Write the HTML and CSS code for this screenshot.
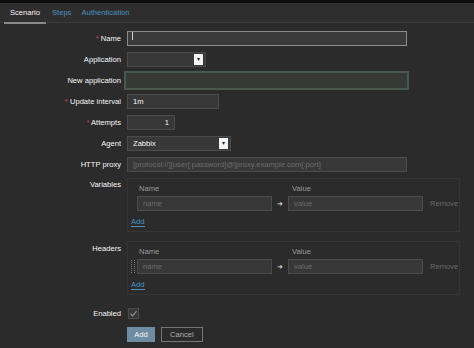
FILE: index.html
```
<html>
	<head>
		<title>Web scenario</title>
		<meta charset="utf-8" />
		<link rel="stylesheet" href="styles.css">
	</head>
	<body>
		<div class="topbar"></div>
		<div class="tabs">
			<span class="tab active">Scenario</span>
			<span class="tab">Steps</span>
			<span class="tab">Authentication</span>
		</div>
		<div class="form">
			<label class="lbl"><span class="req">*</span> Name</label>
			<div><div class="input wide focus"><span class="caret"></span></div></div>

			<label class="lbl">Application</label>
			<div><div class="select app"><span class="val"></span><span class="arrow">&#9662;</span></div></div>

			<label class="lbl">New application</label>
			<div><div class="input newapp"></div></div>

			<label class="lbl"><span class="req">*</span> Update interval</label>
			<div><div class="input interval">1m</div></div>

			<label class="lbl"><span class="req">*</span> Attempts</label>
			<div><div class="input attempts">1</div></div>

			<label class="lbl">Agent</label>
			<div><div class="select agent"><span class="val">Zabbix</span><span class="arrow">&#9662;</span></div></div>

			<label class="lbl">HTTP proxy</label>
			<div><div class="input wide ph">[protocol://][user[:password]@]proxy.example.com[:port]</div></div>

			<label class="lbl top">Variables</label>
			<div class="box">
				<div class="pair head">
					<span class="handle-space"></span>
					<span class="col">Name</span>
					<span class="to"></span>
					<span class="col">Value</span>
				</div>
				<div class="pair">
					<span class="handle-space"></span>
					<div class="input cell ph">name</div>
					<span class="to">&#10140;</span>
					<div class="input cell ph">value</div>
					<span class="remove">Remove</span>
				</div>
				<a class="add">Add</a>
			</div>

			<label class="lbl top headers">Headers</label>
			<div class="box headers">
				<div class="pair head">
					<span class="handle-space"></span>
					<span class="col">Name</span>
					<span class="to"></span>
					<span class="col">Value</span>
				</div>
				<div class="pair">
					<span class="handle-space">
						<svg width="4" height="14" viewBox="0 0 4 14">
							<g fill="#7a7a7a">
								<rect x="0" y="0" width="1" height="1"/><rect x="3" y="0" width="1" height="1"/>
								<rect x="0" y="2" width="1" height="1"/><rect x="3" y="2" width="1" height="1"/>
								<rect x="0" y="4" width="1" height="1"/><rect x="3" y="4" width="1" height="1"/>
								<rect x="0" y="6" width="1" height="1"/><rect x="3" y="6" width="1" height="1"/>
								<rect x="0" y="8" width="1" height="1"/><rect x="3" y="8" width="1" height="1"/>
								<rect x="0" y="10" width="1" height="1"/><rect x="3" y="10" width="1" height="1"/>
								<rect x="0" y="12" width="1" height="1"/><rect x="3" y="12" width="1" height="1"/>
							</g>
						</svg>
					</span>
					<div class="input cell ph">name</div>
					<span class="to">&#10140;</span>
					<div class="input cell ph">value</div>
					<span class="remove">Remove</span>
				</div>
				<a class="add">Add</a>
			</div>

			<label class="lbl enabled">Enabled</label>
			<div class="enabled"><span class="check"><svg width="9" height="9" viewBox="0 0 9 9"><path d="M1.5 4.8 L3.6 6.8 L7.5 2.2" fill="none" stroke="#8a8a8a" stroke-width="1.2"/></svg></span></div>

			<div></div>
			<div class="buttons">
				<button class="btn primary">Add</button>
				<button class="btn">Cancel</button>
			</div>
		</div>
	</body>
</html>
```

FILE: styles.css
```
body {
	margin: 0;
	background: #2b2b2b;
	font-family: "Liberation Sans", Arial, sans-serif;
	font-size: 7.6px;
	color: #f6f6f6;
	width: 474px;
	height: 348px;
	overflow: hidden;
}
.topbar {
	height: 3px;
	background: #0d0d0d;
}
.tabs {
	display: flex;
	gap: 2px;
	height: 19px;
	padding-left: 4px;
	background: #2e2e2e;
	border-bottom: 1px solid #3a3a3a;
	align-items: center;
}
.tab {
	color: #4a90c2;
	padding: 0 4px;
	line-height: 18px;
	height: 18px;
	border-bottom: 2px solid transparent;
	margin-top: 2px;
}
.tab.active {
	color: #f2f2f2;
	border-bottom-color: #8a8a8a;
	padding: 0 6px;
}
.form {
	display: grid;
	grid-template-columns: 121px 1fr;
	column-gap: 6px;
	row-gap: 6px;
	padding-top: 8px;
	grid-auto-rows: minmax(15px, auto);
}
.lbl {
	text-align: right;
	line-height: 15px;
	white-space: nowrap;
}
.lbl.top {
	line-height: 14px;
}
.req {
	color: #d64541;
}
.input {
	box-sizing: border-box;
	height: 15px;
	background: #383838;
	border: 1px solid #4b4b4b;
	line-height: 13px;
	padding: 0 5px;
	color: #f6f6f6;
	white-space: nowrap;
	overflow: hidden;
}
.wide {
	width: 280px;
}
.focus {
	border-color: #8c8c8c;
	background: #3b3b3b;
}
.caret {
	display: inline-block;
	width: 1px;
	height: 8px;
	background: #d0d0d0;
	vertical-align: middle;
	margin-left: -1px;
}
.newapp {
	width: 285px;
	height: 19px;
	margin: -2px 0 -2px -3px;
	border: 2px solid #485a4d;
	background: #363a37;
}
.interval {
	width: 92px;
}
.attempts {
	width: 48px;
	text-align: right;
}
.ph {
	color: #6d6d6d;
}
.select {
	box-sizing: border-box;
	height: 15px;
	display: flex;
	align-items: center;
	background: #383838;
	border: 1px solid #4b4b4b;
	padding-left: 5px;
	padding-right: 2px;
}
.select .val {
	flex: 1;
}
.app {
	width: 79px;
}
.agent {
	width: 104px;
}
.arrow {
	width: 9px;
	height: 11px;
	background: #f4f4f4;
	color: #222;
	font-size: 6px;
	line-height: 11px;
	text-align: center;
}
.box {
	box-sizing: border-box;
	width: 333px;
	height: 54px;
	border: 1px solid #353535;
	padding: 3px 0 0 0;
}
.headers {
	margin-top: 3px;
}
.lbl.headers {
	line-height: 16px;
}
.pair {
	display: flex;
	align-items: center;
	height: 15px;
}
.pair.head {
	height: 12px;
	margin-bottom: 2px;
	color: #9a9a9a;
}
.handle-space {
	width: 9px;
	display: flex;
	justify-content: center;
}
.col {
	width: 135px;
	padding-left: 2px;
}
.cell {
	width: 135px;
}
.to {
	width: 16px;
	text-align: center;
	color: #dcdcdc;
	font-size: 7px;
}
.remove {
	margin-left: 7px;
	color: #6a6a6a;
}
.add {
	display: inline-block;
	margin: 7px 0 0 3px;
	color: #4a90c2;
	border-bottom: 1px solid #4a90c2;
	line-height: 8px;
}
.enabled {
	margin-top: 7px;
}
.lbl.enabled {
	line-height: 11px;
}
.check {
	display: flex;
	box-sizing: border-box;
	width: 11px;
	height: 11px;
	border: 1px solid #4b4b4b;
	background: #383838;
	align-items: center;
	justify-content: center;
	margin-left: 1px;
}
.buttons {
	display: flex;
	gap: 6px;
	margin-top: 2px;
}
.btn {
	box-sizing: border-box;
	height: 15px;
	font-family: inherit;
	font-size: 7.6px;
	background: transparent;
	border: 1px solid #767676;
	color: #b0b0b0;
	padding: 0 8px;
}
.btn.primary {
	background: #6e8ca2;
	border-color: #6e8ca2;
	color: #f4f7f9;
	width: 28px;
	padding: 0;
}
```
